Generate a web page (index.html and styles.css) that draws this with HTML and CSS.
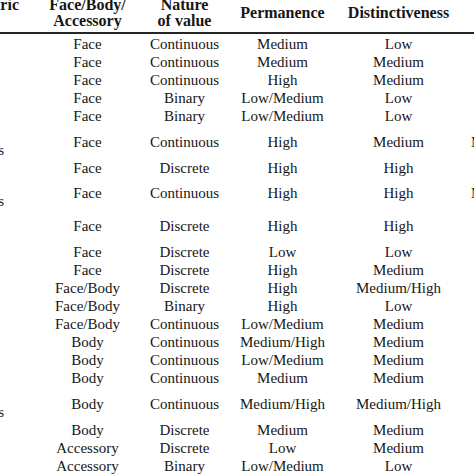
FILE: index.html
```html
<!DOCTYPE html>
<html>
<head>
<meta charset="utf-8">
<link rel="stylesheet" href="styles.css">
</head>
<body>
<table class="tbl">
  <colgroup>
    <col class="w1"><col class="w2"><col class="w3"><col class="w4"><col class="w5"><col class="w6">
  </colgroup>
  <thead>
    <tr>
      <th class="m">Metric</th>
      <th>Face/Body/<br>Accessory</th>
      <th>Nature<br>of value</th>
      <th>Permanence</th>
      <th>Distinctiveness</th>
      <th></th>
    </tr>
  </thead>
  <tbody>
    <tr class="first"><td class="m"></td><td>Face</td><td>Continuous</td><td>Medium</td><td>Low</td><td></td></tr>
    <tr><td class="m"></td><td>Face</td><td>Continuous</td><td>Medium</td><td>Medium</td><td></td></tr>
    <tr><td class="m"></td><td>Face</td><td>Continuous</td><td>High</td><td>Medium</td><td></td></tr>
    <tr><td class="m"></td><td>Face</td><td>Binary</td><td>Low/Medium</td><td>Low</td><td></td></tr>
    <tr><td class="m"></td><td>Face</td><td>Binary</td><td>Low/Medium</td><td>Low</td><td></td></tr>
    <tr class="t34"><td class="m"><div class="l1">Facial</div><div class="l2">landmarks</div></td><td>Face</td><td>Continuous</td><td>High</td><td>Medium</td><td class="x">Medium</td></tr>
    <tr><td class="m"></td><td>Face</td><td>Discrete</td><td>High</td><td>High</td><td></td></tr>
    <tr class="t32"><td class="m"><div class="l1">Facial</div><div class="l2">proportions</div></td><td>Face</td><td>Continuous</td><td>High</td><td>High</td><td class="x">Medium</td></tr>
    <tr class="t34"><td class="m"></td><td>Face</td><td>Discrete</td><td>High</td><td>High</td><td></td></tr>
    <tr><td class="m"></td><td>Face</td><td>Discrete</td><td>Low</td><td>Low</td><td></td></tr>
    <tr><td class="m"></td><td>Face</td><td>Discrete</td><td>High</td><td>Medium</td><td></td></tr>
    <tr><td class="m"></td><td>Face/Body</td><td>Discrete</td><td>High</td><td>Medium/High</td><td></td></tr>
    <tr><td class="m"></td><td>Face/Body</td><td>Binary</td><td>High</td><td>Low</td><td></td></tr>
    <tr><td class="m"></td><td>Face/Body</td><td>Continuous</td><td>Low/Medium</td><td>Medium</td><td></td></tr>
    <tr><td class="m"></td><td>Body</td><td>Continuous</td><td>Medium/High</td><td>Medium</td><td></td></tr>
    <tr><td class="m"></td><td>Body</td><td>Continuous</td><td>Low/Medium</td><td>Medium</td><td></td></tr>
    <tr><td class="m"></td><td>Body</td><td>Continuous</td><td>Medium</td><td>Medium</td><td></td></tr>
    <tr class="t34"><td class="m"><div class="l1">Body</div><div class="l2">proportions</div></td><td>Body</td><td>Continuous</td><td>Medium/High</td><td>Medium/High</td><td></td></tr>
    <tr><td class="m"></td><td>Body</td><td>Discrete</td><td>Medium</td><td>Medium</td><td></td></tr>
    <tr><td class="m"></td><td>Accessory</td><td>Discrete</td><td>Low</td><td>Medium</td><td></td></tr>
    <tr><td class="m"></td><td>Accessory</td><td>Binary</td><td>Low/Medium</td><td>Low</td><td></td></tr>
  </tbody>
</table>
</body>
</html>
```

FILE: styles.css
```css
html, body {
  margin: 0;
  padding: 0;
  overflow: hidden;
  background: #ffffff;
}

.tbl {
  border-collapse: separate;
  border-spacing: 0;
  table-layout: fixed;
  width: 681px;
  margin: -3px 0 0 -100px;
  font-family: "Liberation Serif", "Times New Roman", serif;
  color: #161616;
}

.w1 { width: 135px; }
.w2 { width: 105px; }
.w3 { width: 89px; }
.w4 { width: 107px; }
.w5 { width: 125px; }
.w6 { width: 120px; }

.tbl th {
  font-weight: bold;
  font-size: 16px;
  line-height: 16px;
  height: 32px;
  padding: 0 0 3px 0;
  border-bottom: 2px solid #262626;
  text-align: center;
  vertical-align: middle;
  white-space: nowrap;
}

.tbl th.m {
  text-align: right;
  padding-right: 16px;
  vertical-align: top;
}

.tbl td {
  font-size: 15px;
  line-height: 18px;
  height: 18px;
  padding: 0;
  text-align: center;
  vertical-align: middle;
  white-space: nowrap;
}

.tbl tr.first td {
  padding-top: 1px;
}

.tbl tr.t34 td { height: 34px; }
.tbl tr.t32 td { height: 32px; }

.tbl td.m {
  text-align: right;
  line-height: 16px;
  padding-right: 31px;
}

.tbl td.m .l1 {
  padding-right: 40px;
}

.tbl td.x {
  text-align: left;
  padding-left: 10px;
}
```
